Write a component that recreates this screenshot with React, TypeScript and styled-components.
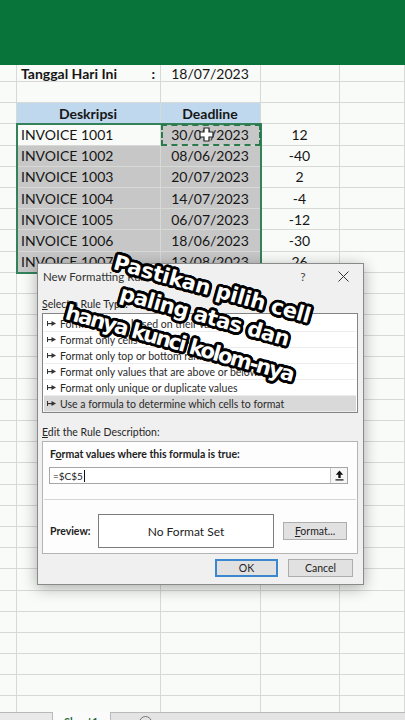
import React from 'react';
import styled, { createGlobalStyle } from 'styled-components';

const Global = createGlobalStyle`
  html, body { margin: 0; padding: 0; }
  body {
    width: 405px; height: 720px; overflow: hidden;
    background: #f9fbf9;
    font-family: Lato, "Liberation Sans", sans-serif;
  }
`;

const Screen = styled.div`
  position: relative;
  width: 405px;
  height: 720px;
  overflow: hidden;
  display: flex;
  flex-direction: column;
  background: #f9fbf9;
`;

const Ribbon = styled.div`
  flex: none;
  height: 65px;
  background: #087439;
`;

const SheetArea = styled.div`
  position: relative;
  flex: 1;
  overflow: hidden;
`;

const Grid = styled.div`
  display: grid;
  grid-template-columns: 17px 144px 100px 79px 65px;
  grid-template-rows: 17px;
  grid-auto-rows: 21.2px;
`;

type Kind = 'plain' | 'header' | 'selected';

const Cell = styled.div<{ $kind?: Kind; $align?: 'left' | 'center' | 'between'; $bold?: boolean }>`
  box-sizing: border-box;
  border-right: 1px solid #d6d9d6;
  border-bottom: 1px solid #d6d9d6;
  background: ${(p) => (p.$kind === 'header' ? '#c0d8ee' : p.$kind === 'selected' ? '#c6c7c6' : 'transparent')};
  display: flex;
  align-items: center;
  justify-content: ${(p) => (p.$align === 'center' ? 'center' : p.$align === 'between' ? 'space-between' : 'flex-start')};
  padding: 0 5px 0 4px;
  font-size: 14px;
  font-weight: ${(p) => (p.$bold ? 700 : 400)};
  color: #161616;
  white-space: nowrap;
  overflow: hidden;
`;

const SelectionBox = styled.div`
  position: absolute;
  left: 16px;
  top: 58.4px;
  width: 246px;
  height: 150.4px;
  box-sizing: border-box;
  border: 2px solid #34825a;
  pointer-events: none;
`;

const Marquee = styled.div`
  position: absolute;
  left: 161px;
  top: 59.4px;
  width: 100px;
  height: 21.2px;
  box-sizing: border-box;
  border: 2px dashed #2b7a4b;
`;

const CursorMark = styled.div`
  position: absolute;
  left: 199px;
  top: 62px;
  line-height: 0;
`;

const TabBar = styled.div`
  flex: none;
  height: 8px;
  display: flex;
  background: #e6e6e6;
`;

const TabSpacer = styled.div`
  width: 53px;
  box-sizing: border-box;
  border-top: 1px solid #b9b9b9;
  border-right: 1px solid #b9b9b9;
  background: #e9e9e9;
`;

const SheetTab = styled.div`
  width: 57px;
  background: #fbfbfb;
  font-size: 11px;
  font-weight: 700;
  color: #2b6b3e;
  padding: 4px 0 0 11px;
  box-sizing: border-box;
  line-height: 11px;
  overflow: hidden;
`;

const TabRest = styled.div`
  flex: 1;
  position: relative;
  box-sizing: border-box;
  border-top: 1px solid #b9b9b9;
  border-left: 1px solid #b9b9b9;
  background: #e4e4e4;
  overflow: hidden;
`;

const AddSheet = styled.div`
  position: absolute;
  left: 28px;
  top: 3px;
  width: 13px;
  height: 13px;
  border-radius: 50%;
  border: 1px solid #777;
  box-sizing: border-box;
`;

/* ---------- Dialog ---------- */

const Dialog = styled.div`
  position: absolute;
  left: 37px;
  top: 263px;
  width: 327px;
  height: 322px;
  box-sizing: border-box;
  background: #f0f0f0;
  border: 1px solid #8a8a8a;
  box-shadow: 0 3px 14px rgba(0, 0, 0, 0.32);
  display: flex;
  flex-direction: column;
  padding: 0 5px 0 4px;
  font-family: Lato, "Liberation Sans", sans-serif;
  font-size: 10.5px;
  color: #222;
`;

const TitleBar = styled.div`
  height: 25px;
  display: flex;
  align-items: center;
  margin: 0 -5px 0 -4px;
  padding-left: 5px;
  font-size: 11.5px;
  color: #333;
`;

const TitleText = styled.span`
  flex: 1;
`;

const TitleButton = styled.div<{ $w: number }>`
  width: ${(p) => p.$w}px;
  height: 25px;
  display: flex;
  align-items: center;
  justify-content: center;
  font-size: 12px;
  color: #444;
  &:first-of-type { margin-right: 4px; }
`;

const SectionLabel = styled.div<{ $top: number }>`
  margin-top: ${(p) => p.$top}px;
  margin-bottom: 2px;
  line-height: 14px;
  color: #262626;
`;

const Underlined = styled.span`
  text-decoration: underline;
`;

const RuleList = styled.div`
  height: 100px;
  box-sizing: border-box;
  border: 1px solid #848484;
  background: #fff;
  padding-top: 2px;
  display: flex;
  flex-direction: column;
`;

const RuleItem = styled.div<{ $selected?: boolean }>`
  height: 16px;
  box-sizing: border-box;
  margin: 0 1px;
  display: flex;
  align-items: center;
  gap: 4px;
  padding-left: 3px;
  border-bottom: 1px solid #ececec;
  background: ${(p) => (p.$selected ? '#d9d9d9' : 'transparent')};
  white-space: nowrap;
  overflow: hidden;
  color: #2a2a2a;
`;

const Panel = styled.div`
  height: 113px;
  box-sizing: border-box;
  border: 1px solid #b5b5b5;
  background: #fdfdfd;
  display: flex;
  flex-direction: column;
  padding: 5px 9px 0 6px;
`;

const BoldLabel = styled.div`
  line-height: 14px;
  font-weight: 700;
  padding-left: 1px;
  color: #222;
`;

const FormulaInput = styled.div`
  margin-top: 6px;
  height: 17px;
  box-sizing: border-box;
  border: 1px solid #a6a6a6;
  background: #fff;
  display: flex;
  align-items: center;
`;

const FormulaText = styled.div`
  flex: 1;
  padding-left: 3px;
  font-size: 10px;
  display: flex;
  align-items: center;
  color: #222;
`;

const Caret = styled.span`
  display: inline-block;
  width: 1px;
  height: 12px;
  background: #111;
  margin-left: 1px;
`;

const RefButton = styled.div`
  width: 17px;
  height: 15px;
  box-sizing: border-box;
  border-left: 1px solid #c4c4c4;
  background: #f6f6f6;
  display: flex;
  align-items: center;
  justify-content: center;
`;

const Separator = styled.div`
  margin: 15px -8px 0 -5px;
  height: 1px;
  background: #d6d6d6;
`;

const PreviewRow = styled.div`
  margin-top: 14px;
  height: 34px;
  display: flex;
  align-items: center;
`;

const PreviewLabel = styled(BoldLabel)`
  width: 48px;
`;

const PreviewBox = styled.div`
  width: 176px;
  height: 34px;
  box-sizing: border-box;
  border: 1px solid #7c7c7c;
  background: #fff;
  display: flex;
  align-items: center;
  justify-content: center;
  font-size: 12px;
  color: #222;
`;

const PushButton = styled.div<{ $w: number; $primary?: boolean }>`
  width: ${(p) => p.$w}px;
  height: 18px;
  box-sizing: border-box;
  border: ${(p) => (p.$primary ? '2px solid #3a86cf' : '1px solid #adadad')};
  background: #e1e1e1;
  display: flex;
  align-items: center;
  justify-content: center;
  color: #222;
`;

const FormatButton = styled(PushButton)`
  margin-left: 9px;
`;

const ButtonRow = styled.div`
  margin-top: 5px;
  margin-right: 5px;
  display: flex;
  justify-content: flex-end;
  gap: 10px;
`;

/* ---------- Caption ---------- */

const outline = (() => {
  const parts: string[] = [];
  for (let i = 0; i < 24; i++) {
    const a = (i / 24) * Math.PI * 2;
    parts.push(`${(Math.cos(a) * 2.8).toFixed(2)}px ${(Math.sin(a) * 2.8).toFixed(2)}px 0 #000`);
  }
  for (let i = 0; i < 12; i++) {
    const a = (i / 12) * Math.PI * 2;
    parts.push(`${(Math.cos(a) * 1.5).toFixed(2)}px ${(Math.sin(a) * 1.5).toFixed(2)}px 0 #000`);
  }
  return parts.join(', ');
})();

const Caption = styled.div`
  position: absolute;
  left: 54px;
  top: 274px;
  width: 300px;
  transform: rotate(15.5deg);
  text-align: center;
  font-family: "DejaVu Sans", "Liberation Sans", sans-serif;
  font-weight: 700;
  font-size: 21px;
  line-height: 28px;
  color: #fff;
  text-shadow: ${outline};
  white-space: nowrap;
`;

const CaptionLine = styled.div<{ $spacing: number; $shift?: number; $drop?: number }>`
  letter-spacing: ${(p) => p.$spacing}px;
  margin-top: ${(p) => p.$drop ?? 0}px;
  transform: translateX(${(p) => p.$shift ?? 0}px);
`;

/* ---------- Icons ---------- */

const ItemArrow = () => (
  <svg width="9" height="7" viewBox="0 0 9 7">
    <rect x="0" y="1" width="1" height="5" fill="#333" />
    <rect x="1" y="3" width="4" height="1.2" fill="#333" />
    <path d="M4.5 1 L9 3.6 L4.5 6 Z" fill="#333" />
  </svg>
);

const CloseIcon = () => (
  <svg width="11" height="11" viewBox="0 0 11 11">
    <path d="M0.5 0.5 L10.5 10.5 M10.5 0.5 L0.5 10.5" stroke="#333" strokeWidth="1" />
  </svg>
);

const UpArrowIcon = () => (
  <svg width="9" height="11" viewBox="0 0 9 11">
    <path d="M4.5 0.5 L0.8 4.8 H3.3 V8 H5.7 V4.8 H8.2 Z" fill="#111" />
    <rect x="0.5" y="9.3" width="8" height="1.2" fill="#111" />
  </svg>
);

const PlusCursor = () => (
  <svg width="15" height="15" viewBox="0 0 15 15">
    <path
      d="M5 1 H10 V5 H14 V10 H10 V14 H5 V10 H1 V5 H5 Z"
      fill="#fff"
      stroke="#222"
      strokeWidth="1.2"
    />
  </svg>
);

/* ---------- Data ---------- */

const invoices: [string, string, string][] = [
  ['INVOICE 1001', '30/07/2023', '12'],
  ['INVOICE 1002', '08/06/2023', '-40'],
  ['INVOICE 1003', '20/07/2023', '2'],
  ['INVOICE 1004', '14/07/2023', '-4'],
  ['INVOICE 1005', '06/07/2023', '-12'],
  ['INVOICE 1006', '18/06/2023', '-30'],
  ['INVOICE 1007', '13/08/2023', '26'],
];

const rules = [
  'Format all cells based on their values',
  'Format only cells that contain',
  'Format only top or bottom ranked values',
  'Format only values that are above or below average',
  'Format only unique or duplicate values',
  'Use a formula to determine which cells to format',
];

const EMPTY_ROWS = 24;

export default function App() {
  return (
    <>
      <Global />
      <Screen>
        <Ribbon />
        <SheetArea>
          <Grid>
            <Cell />
            <Cell $bold $align="between">
              <span>Tanggal Hari Ini</span>
              <span>:</span>
            </Cell>
            <Cell $align="center">18/07/2023</Cell>
            <Cell />
            <Cell />

            <Cell />
            <Cell />
            <Cell />
            <Cell />
            <Cell />

            <Cell />
            <Cell $kind="header" $bold $align="center">Deskripsi</Cell>
            <Cell $kind="header" $bold $align="center">Deadline</Cell>
            <Cell />
            <Cell />

            {invoices.map(([name, date, diff], i) => (
              <React.Fragment key={name}>
                <Cell />
                <Cell $kind={i === 0 ? 'plain' : 'selected'}>{name}</Cell>
                <Cell $kind="selected" $align="center">{date}</Cell>
                <Cell $align="center">{diff}</Cell>
                <Cell />
              </React.Fragment>
            ))}

            {Array.from({ length: EMPTY_ROWS * 5 }).map((_, i) => (
              <Cell key={`e${i}`} />
            ))}
          </Grid>
          <SelectionBox />
          <Marquee />
          <CursorMark>
            <PlusCursor />
          </CursorMark>
        </SheetArea>
        <TabBar>
          <TabSpacer />
          <SheetTab>Sheet1</SheetTab>
          <TabRest>
            <AddSheet />
          </TabRest>
        </TabBar>

        <Dialog>
          <TitleBar>
            <TitleText>New Formatting Rule</TitleText>
            <TitleButton $w={32}>?</TitleButton>
            <TitleButton $w={40}>
              <CloseIcon />
            </TitleButton>
          </TitleBar>

          <SectionLabel $top={8}>
            <Underlined>S</Underlined>elect a Rule Type:
          </SectionLabel>
          <RuleList>
            {rules.map((r, i) => (
              <RuleItem key={r} $selected={i === rules.length - 1}>
                <ItemArrow />
                <span>{r}</span>
              </RuleItem>
            ))}
          </RuleList>

          <SectionLabel $top={12}>
            <Underlined>E</Underlined>dit the Rule Description:
          </SectionLabel>
          <Panel>
            <BoldLabel>
              F<Underlined>o</Underlined>rmat values where this formula is true:
            </BoldLabel>
            <FormulaInput>
              <FormulaText>
                =$C$5
                <Caret />
              </FormulaText>
              <RefButton>
                <UpArrowIcon />
              </RefButton>
            </FormulaInput>
            <Separator />
            <PreviewRow>
              <PreviewLabel>Preview:</PreviewLabel>
              <PreviewBox>No Format Set</PreviewBox>
              <FormatButton $w={64}>
                <span>
                  <Underlined>F</Underlined>ormat...
                </span>
              </FormatButton>
            </PreviewRow>
          </Panel>
          <ButtonRow>
            <PushButton $w={63} $primary>OK</PushButton>
            <PushButton $w={65}>Cancel</PushButton>
          </ButtonRow>
        </Dialog>

        <Caption>
          <CaptionLine $spacing={-0.3}>Pastikan pilih cell</CaptionLine>
          <CaptionLine $spacing={-0.6}>paling atas dan</CaptionLine>
          <CaptionLine $spacing={-1.8} $shift={-17} $drop={5}>hanya kunci kolom-nya</CaptionLine>
        </Caption>
      </Screen>
    </>
  );
}
